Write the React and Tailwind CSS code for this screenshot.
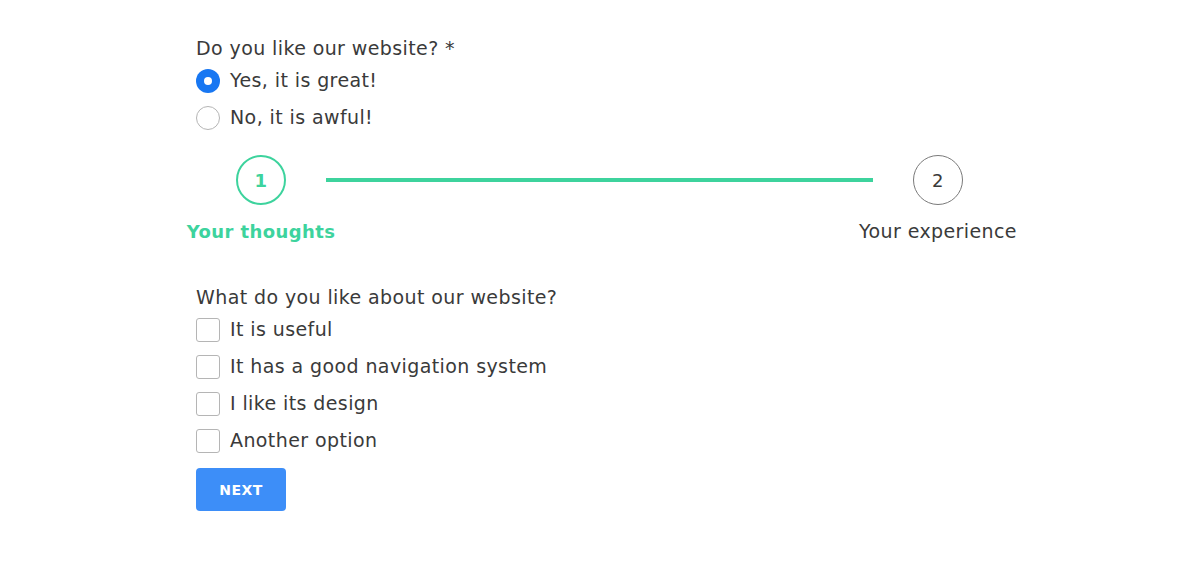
import React, { useState } from "react";

const likes = [
  "It is useful",
  "It has a good navigation system",
  "I like its design",
  "Another option",
];

export default function App() {
  const [answer, setAnswer] = useState("yes");
  const [checked, setChecked] = useState({});

  return (
    <div
      className="min-h-[566px] bg-white text-[#3a3a3a]"
      style={{ fontFamily: '"DejaVu Sans", "Open Sans", sans-serif' }}
    >
      <div className="w-[808px] mx-auto pt-[35px] text-[19px] leading-[27px] tracking-[0.4px]">
        {/* Step 1 question */}
        <p>Do you like our website? *</p>
        <div className="flex flex-col">
          {[
            ["yes", "Yes, it is great!"],
            ["no", "No, it is awful!"],
          ].map(([value, label]) => (
            <label key={value} className="flex items-center gap-[10px] h-[37px] cursor-pointer">
              <span
                onClick={() => setAnswer(value)}
                className={
                  answer === value
                    ? "w-[24px] h-[24px] rounded-full bg-[#1877f2] flex items-center justify-center"
                    : "w-[24px] h-[24px] rounded-full border border-[#b5b5b5] bg-white"
                }
              >
                {answer === value && <span className="w-[8px] h-[8px] rounded-full bg-white" />}
              </span>
              <span>{label}</span>
            </label>
          ))}
        </div>

        {/* Stepper */}
        <div className="flex w-[837px] -ml-[15px] mt-[19px]">
          <div className="w-[160px] flex flex-col items-center">
            <div className="w-[50px] h-[50px] rounded-full border-2 border-[#3dd39d] flex items-center justify-center text-[#3dd39d] font-semibold text-[18px]">
              1
            </div>
            <span className="mt-[13px] font-bold text-[#3dd39d] text-[18px] whitespace-nowrap">Your thoughts</span>
          </div>
          <div className="flex-1 -mx-[15px] mt-[23px] h-[4px] bg-[#3dd39d]" />
          <div className="w-[160px] flex flex-col items-center">
            <div className="w-[50px] h-[50px] rounded-full border border-[#7a7a7a] flex items-center justify-center text-[18px]">
              2
            </div>
            <span className="mt-[13px] whitespace-nowrap">Your experience</span>
          </div>
        </div>

        {/* Step 2 question */}
        <p className="mt-[39px]">What do you like about our website?</p>
        <div className="flex flex-col">
          {likes.map((item, i) => (
            <label key={item} className="flex items-center gap-[10px] h-[37px] cursor-pointer">
              <span
                onClick={() => setChecked({ ...checked, [i]: !checked[i] })}
                className="w-[24px] h-[24px] rounded-[3px] border border-[#b5b5b5] bg-white"
              />
              <span>{item}</span>
            </label>
          ))}
        </div>

        <button className="mt-[9px] w-[90px] h-[43px] rounded-[4px] bg-[#3d8ef8] text-white text-[14px] font-bold leading-[20px] tracking-[0.5px]">
          NEXT
        </button>
      </div>
    </div>
  );
}
